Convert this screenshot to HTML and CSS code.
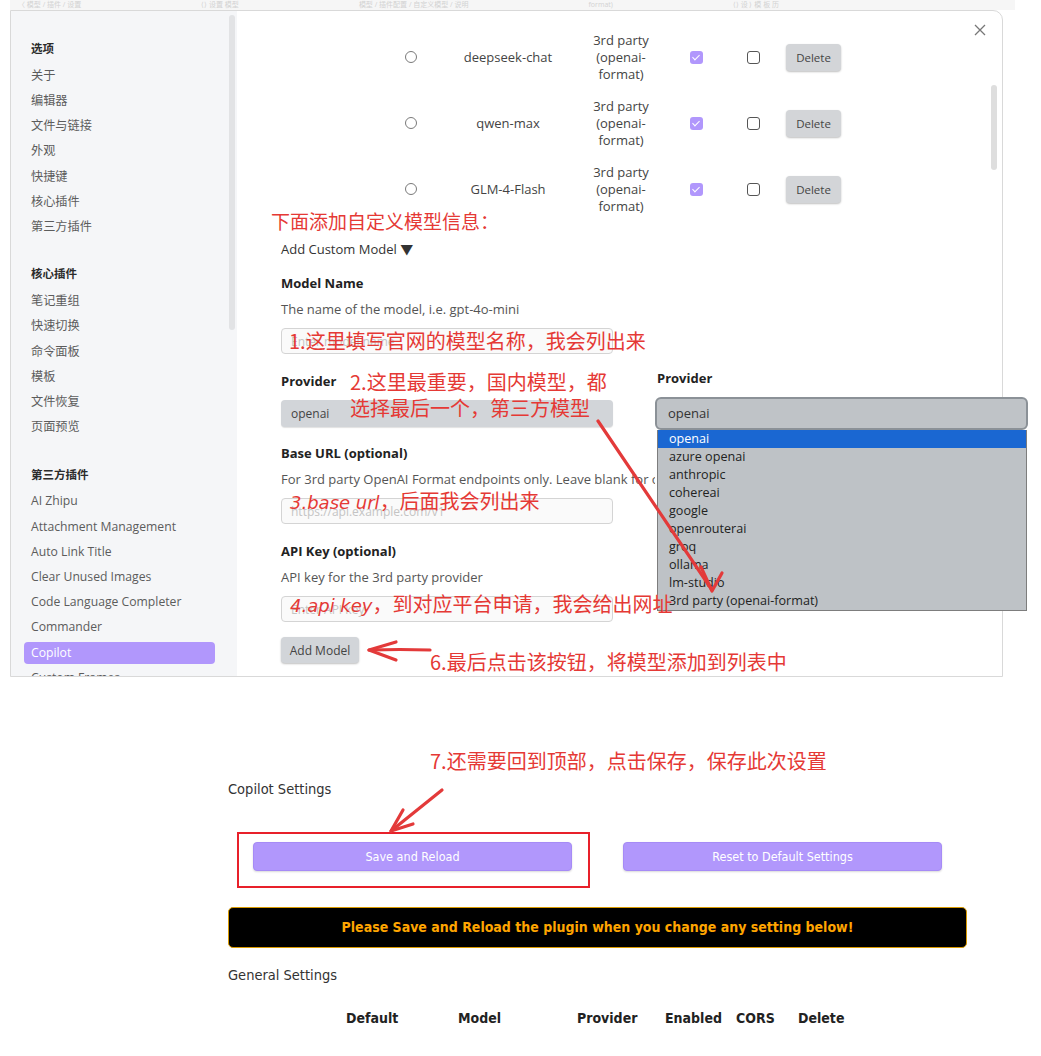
FILE: index.html
```html
<!DOCTYPE html>
<html lang="zh-CN">

<head>
    <meta charset="UTF-8">
    <meta name="viewport" content="width=device-width, initial-scale=1.0">
    <title>Copilot 设置说明</title>
    <link rel="stylesheet" href="styles.css">
</head>

<body>
    <div class="page">
        <!-- app behind the settings modal -->
        <div class="backdrop-strip">
            <span>〈 模型 / 插件 / 设置</span>
            <span>⟨⟩ 设置 模型</span>
            <span>模型 / 插件配置 / 自定义模型 / 说明</span>
            <span>format)</span>
            <span>⟨⟩ 设 ⟩ 模 板 历</span>
        </div>

        <div class="modal">
            <aside class="sidebar">
                <div class="nav-group">
                    <div class="nav-title">选项</div>
                    <div class="nav-item">关于</div>
                    <div class="nav-item">编辑器</div>
                    <div class="nav-item">文件与链接</div>
                    <div class="nav-item">外观</div>
                    <div class="nav-item">快捷键</div>
                    <div class="nav-item">核心插件</div>
                    <div class="nav-item">第三方插件</div>
                </div>
                <div class="nav-group">
                    <div class="nav-title">核心插件</div>
                    <div class="nav-item">笔记重组</div>
                    <div class="nav-item">快速切换</div>
                    <div class="nav-item">命令面板</div>
                    <div class="nav-item">模板</div>
                    <div class="nav-item">文件恢复</div>
                    <div class="nav-item">页面预览</div>
                </div>
                <div class="nav-group">
                    <div class="nav-title">第三方插件</div>
                    <div class="nav-item">AI Zhipu</div>
                    <div class="nav-item">Attachment Management</div>
                    <div class="nav-item">Auto Link Title</div>
                    <div class="nav-item">Clear Unused Images</div>
                    <div class="nav-item">Code Language Completer</div>
                    <div class="nav-item">Commander</div>
                    <div class="nav-item active">Copilot</div>
                    <div class="nav-item">Custom Frames</div>
                </div>
                <div class="sidebar-scroll"></div>
            </aside>

            <main class="content">
                <div class="close">
                    <svg width="12" height="12" viewBox="0 0 12 12">
                        <path d="M1 1 L11 11 M11 1 L1 11" stroke="#777" stroke-width="1.3" fill="none" />
                    </svg>
                </div>
                <div class="content-scroll"></div>

                <div class="model-table">
                    <div class="model-row">
                        <span class="radio"></span>
                        <span class="model-name">deepseek-chat</span>
                        <span class="provider">3rd party<br>(openai-<br>format)</span>
                        <span class="check checked"></span>
                        <span class="check"></span>
                        <button class="delete-button">Delete</button>
                    </div>
                    <div class="model-row">
                        <span class="radio"></span>
                        <span class="model-name">qwen-max</span>
                        <span class="provider">3rd party<br>(openai-<br>format)</span>
                        <span class="check checked"></span>
                        <span class="check"></span>
                        <button class="delete-button">Delete</button>
                    </div>
                    <div class="model-row">
                        <span class="radio"></span>
                        <span class="model-name">GLM-4-Flash</span>
                        <span class="provider">3rd party<br>(openai-<br>format)</span>
                        <span class="check checked"></span>
                        <span class="check"></span>
                        <button class="delete-button">Delete</button>
                    </div>
                </div>

                <div class="custom-model">
                    <div class="summary">Add Custom Model ▼</div>

                    <div class="field first">
                        <div class="field-label">Model Name</div>
                        <div class="field-desc">The name of the model, i.e. gpt-4o-mini</div>
                        <input class="text-input" placeholder="Enter model name">
                    </div>

                    <div class="field">
                        <div class="field-label">Provider</div>
                        <div class="select-box">openai</div>
                    </div>

                    <div class="field tight">
                        <div class="field-label">Base URL (optional)</div>
                        <div class="field-desc clipped">For 3rd party OpenAI Format endpoints only. Leave blank for other providers.</div>
                        <input class="text-input" placeholder="https://api.example.com/v1">
                    </div>

                    <div class="field">
                        <div class="field-label">API Key (optional)</div>
                        <div class="field-desc">API key for the 3rd party provider</div>
                        <input class="text-input" placeholder="Enter API key">
                    </div>

                    <button class="add-button">Add Model</button>
                </div>
            </main>
        </div>

        <!-- opened provider list -->
        <div class="dropdown">
            <div class="dropdown-label">Provider</div>
            <div class="dropdown-select">openai</div>
            <div class="dropdown-list">
                <div class="dropdown-option selected">openai</div>
                <div class="dropdown-option">azure openai</div>
                <div class="dropdown-option">anthropic</div>
                <div class="dropdown-option">cohereai</div>
                <div class="dropdown-option">google</div>
                <div class="dropdown-option">openrouterai</div>
                <div class="dropdown-option">groq</div>
                <div class="dropdown-option">ollama</div>
                <div class="dropdown-option">lm-studio</div>
                <div class="dropdown-option">3rd party (openai-format)</div>
            </div>
        </div>

        <section class="copilot">
            <div class="section-title">Copilot Settings</div>
            <div class="action-row">
                <button class="primary-button">Save and Reload</button>
                <button class="primary-button">Reset to Default Settings</button>
            </div>
            <div class="warning">Please Save and Reload the plugin when you change any setting below!</div>
            <div class="section-title general">General Settings</div>
            <div class="table-head">
                <span>Default</span>
                <span>Model</span>
                <span>Provider</span>
                <span>Enabled</span>
                <span>CORS</span>
                <span>Delete</span>
            </div>
        </section>

        <!-- red notes drawn over the screenshot -->
        <div class="note note-title">下面添加自定义模型信息：</div>
        <div class="note note-1">1.这里填写官网的模型名称，我会列出来</div>
        <div class="note note-2">2.这里最重要，国内模型，都<br>选择最后一个，第三方模型</div>
        <div class="note note-3"><span class="hand">3.base url</span>，后面我会列出来</div>
        <div class="note note-4"><span class="hand">4.api key</span>，到对应平台申请，我会给出网址</div>
        <div class="note note-6">6.最后点击该按钮，将模型添加到列表中</div>
        <div class="note note-7">7.还需要回到顶部，点击保存，保存此次设置</div>
        <div class="save-frame"></div>

        <svg class="arrows" width="1041" height="1056" viewBox="0 0 1041 1056">
            <g stroke="#e33a3a" stroke-width="3.2" fill="none" stroke-linecap="round" stroke-linejoin="round">
                <path d="M598 421 L712 590" />
                <path d="M701 567 L712 591 L722 573" />
                <path d="M430 650 Q400 649 369 650" />
                <path d="M396 642 L369 650 L396 660" />
                <path d="M442 790 L391 831" />
                <path d="M403 810 L391 831 L413 824" />
            </g>
        </svg>
    </div>
</body>

</html>
```

FILE: styles.css
```css
* {
    box-sizing: border-box;
}

body {
    margin: 0;
    background-color: #fff;
    font-family: "Open Sans", "Noto Sans CJK SC", sans-serif;
    color: #333;
}

.page {
    position: relative;
    width: 1041px;
    height: 1056px;
    overflow: hidden;
}

.backdrop-strip {
    display: flex;
    gap: 120px;
    height: 10px;
    margin-left: 10px;
    width: 1005px;
    padding-left: 8px;
    background-color: #f6f6f6;
    overflow: hidden;
    font-size: 7px;
    line-height: 9px;
    color: #d2d2d2;
    white-space: nowrap;
}

/* settings modal */

.modal {
    display: flex;
    margin-left: 10px;
    width: 993px;
    height: 667px;
    border: 1px solid #d9d9d9;
    border-radius: 0 10px 0 0;
    background-color: #fff;
    overflow: hidden;
}

.sidebar {
    position: relative;
    flex: none;
    width: 226px;
    padding: 27px 22px 0 13px;
    background-color: #f5f6f8;
    display: flex;
    flex-direction: column;
    gap: 25.5px;
}

.nav-group {
    display: flex;
    flex-direction: column;
    gap: 3.2px;
}

.nav-title {
    height: 22px;
    line-height: 22px;
    padding-left: 7px;
    margin-bottom: 1.6px;
    font-size: 11.5px;
    font-weight: 600;
    color: #2b2b2b;
}

.nav-item {
    height: 22px;
    line-height: 22px;
    padding-left: 7px;
    border-radius: 4px;
    font-size: 12.2px;
    color: #5c5c5c;
    white-space: nowrap;
}

.nav-item.active {
    background-color: #b197fc;
    color: #fff;
}

.sidebar-scroll {
    position: absolute;
    left: 218px;
    top: 4px;
    width: 6px;
    height: 315px;
    border-radius: 3px;
    background-color: #e2e3e5;
}

.content {
    position: relative;
    flex: 1;
    padding: 13px 0 0 44px;
    font-size: 13px;
    overflow: hidden;
}

.close {
    position: absolute;
    right: 16px;
    top: 13px;
    width: 12px;
    height: 12px;
    line-height: 0;
}

.content-scroll {
    position: absolute;
    right: 5px;
    top: 74px;
    width: 6px;
    height: 85px;
    border-radius: 3px;
    background-color: #dedede;
}

/* model table */

.model-row {
    display: grid;
    grid-template-columns: 74px 120px 106px 44px 70px auto;
    align-items: center;
    justify-items: center;
    height: 66px;
    margin-left: 93px;
    color: #444;
}

.radio {
    width: 12px;
    height: 12px;
    border: 1px solid #7a7a7a;
    border-radius: 50%;
    background-color: #fff;
}

.provider {
    line-height: 17px;
    text-align: center;
}

.check {
    width: 13px;
    height: 13px;
    border: 1.3px solid #555;
    border-radius: 3px;
    background-color: #fff;
}

.check.checked {
    position: relative;
    border: none;
    background-color: #b197fc;
}

.check.checked::after {
    content: "";
    position: absolute;
    left: 4px;
    top: 2px;
    width: 3px;
    height: 6px;
    border: solid #fff;
    border-width: 0 1.5px 1.5px 0;
    transform: rotate(45deg);
}

.delete-button {
    justify-self: start;
    margin-left: -2px;
    width: 55px;
    height: 27px;
    border: none;
    border-radius: 4px;
    background-color: #d3d5d8;
    box-shadow: 0 1px 2px rgba(0, 0, 0, 0.25);
    font-family: "Open Sans", sans-serif;
    font-size: 11.5px;
    color: #444;
}

/* add custom model form */

.summary {
    margin-top: 17px;
    line-height: 20px;
    font-weight: 500;
    color: #333;
}

.field {
    margin-top: 17px;
}

.field.first {
    margin-top: 14px;
}

.field.tight {
    margin-top: 16px;
}

.field-label {
    line-height: 20px;
    font-weight: 700;
    color: #222;
}

.field-desc {
    margin-top: 6px;
    line-height: 20px;
    color: #555;
    white-space: nowrap;
}

.field-desc.clipped {
    width: 374px;
    overflow: hidden;
}

.text-input {
    display: block;
    width: 332px;
    height: 26px;
    margin-top: 9px;
    padding: 0 9px;
    border: 1px solid #d4d4d4;
    border-radius: 4px;
    background-color: #fafafa;
    font-family: "Open Sans", sans-serif;
    font-size: 12px;
    color: #333;
}

.text-input::placeholder {
    color: #c4c4c4;
}

.select-box {
    width: 332px;
    height: 27px;
    margin-top: 9px;
    padding-left: 10px;
    border-radius: 4px;
    background-color: #d2d5d9;
    box-shadow: 0 1px 1px rgba(0, 0, 0, 0.12);
    line-height: 27px;
    font-size: 12px;
    color: #444;
}

.add-button {
    display: block;
    margin-top: 15px;
    width: 78px;
    height: 26px;
    border: none;
    border-radius: 4px;
    background-color: #d2d5d9;
    box-shadow: 0 1px 2px rgba(0, 0, 0, 0.25);
    font-family: "Open Sans", sans-serif;
    font-size: 12px;
    color: #444;
}

/* opened provider dropdown */

.dropdown {
    position: absolute;
    left: 655px;
    top: 368px;
    width: 373px;
    font-size: 12.6px;
}

.dropdown-label {
    padding-left: 2px;
    line-height: 20px;
    font-size: 13px;
    font-weight: 700;
    color: #222;
}

.dropdown-select {
    margin-top: 9px;
    height: 33px;
    padding-left: 11px;
    border: 2px solid #8b9197;
    border-radius: 6px;
    background-color: #bfc3c7;
    line-height: 29px;
    font-size: 13px;
    color: #333;
}

.dropdown-list {
    margin: 0 1px 0 2px;
    border: 1px solid #7d7d7d;
    border-top: none;
    background-color: #bec2c6;
}

.dropdown-option {
    height: 18px;
    line-height: 18px;
    padding-left: 11px;
    color: #222;
}

.dropdown-option.selected {
    background-color: #1a67d2;
    color: #fff;
}

/* plugin settings top */

.copilot {
    width: 967px;
    padding: 102px 0 0 228px;
    font-family: "DejaVu Sans Condensed", "DejaVu Sans", sans-serif;
    font-stretch: condensed;
    color: #333;
}

.section-title {
    line-height: 20px;
    font-size: 14.5px;
}

.section-title.general {
    margin-top: 17px;
}

.action-row {
    display: flex;
    gap: 51px;
    margin-top: 43px;
    padding: 0 25px;
}

.primary-button {
    width: 319px;
    height: 29px;
    border: 1px solid #a68bf6;
    border-radius: 4px;
    background-color: #b197fc;
    box-shadow: 0 1px 2px rgba(0, 0, 0, 0.15);
    font-family: inherit;
    font-stretch: condensed;
    font-size: 12.5px;
    color: #fff;
}

.warning {
    margin-top: 36px;
    height: 41px;
    border: 1px solid #d99a00;
    border-radius: 5px;
    background-color: #000;
    line-height: 39px;
    text-align: center;
    font-size: 14px;
    font-weight: 700;
    color: #ffa500;
}

.table-head {
    display: grid;
    grid-template-columns: 112px 119px 88px 71px 62px auto;
    margin: 23px 0 0 118px;
    line-height: 20px;
    font-size: 14px;
    font-weight: 700;
    color: #222;
}

/* annotations */

.note {
    position: absolute;
    font-family: "Noto Sans CJK SC", sans-serif;
    font-size: 20px;
    line-height: 26px;
    color: #e53935;
    white-space: nowrap;
}

.hand {
    font-family: "DejaVu Sans", sans-serif;
    font-style: italic;
    font-size: 18px;
}

.note-title {
    left: 271px;
    top: 208px;
    font-size: 19px;
}

.note-1 {
    left: 289px;
    top: 328px;
}

.note-2 {
    left: 350px;
    top: 369px;
}

.note-3 {
    left: 290px;
    top: 488px;
}

.note-4 {
    left: 290px;
    top: 591px;
}

.note-6 {
    left: 430px;
    top: 649px;
}

.note-7 {
    left: 430px;
    top: 748px;
}

.save-frame {
    position: absolute;
    left: 237px;
    top: 832px;
    width: 353px;
    height: 56px;
    border: 2px solid #e8202a;
}

.arrows {
    position: absolute;
    left: 0;
    top: 0;
    pointer-events: none;
}
```
